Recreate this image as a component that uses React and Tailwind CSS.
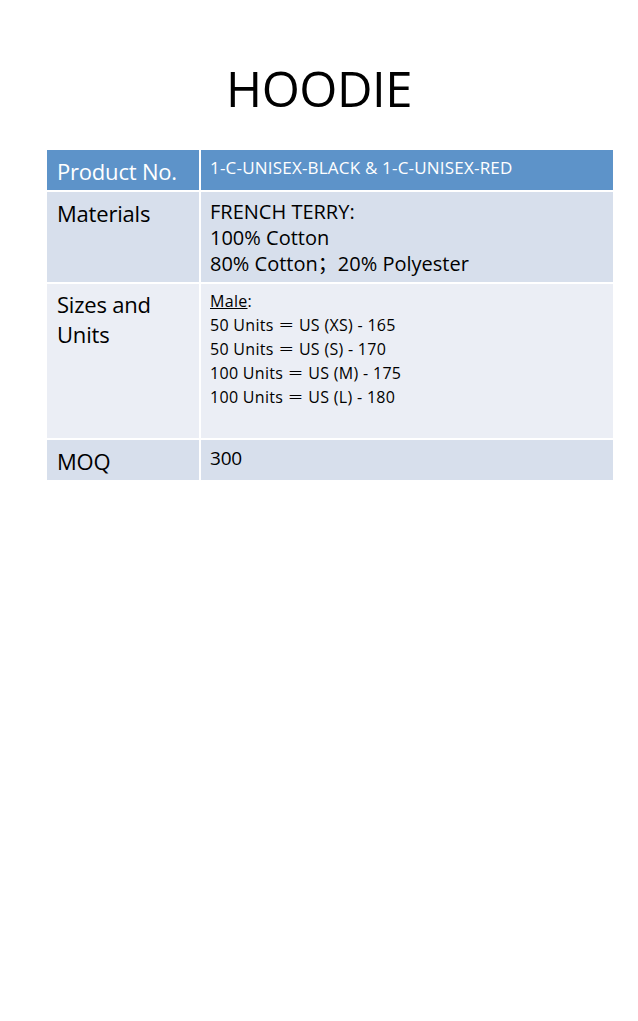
export default function App() {
  const font = { fontFamily: '"Open Sans", "Noto Sans CJK SC", sans-serif' };
  return (
    <div className="w-[638px] h-[1021px] bg-white text-black" style={font}>
      <h1 className="pt-[56px] text-center text-[49px] leading-[64px] tracking-[-0.5px]">HOODIE</h1>
      <div className="mt-[30px] mx-[47px] w-[566px] grid grid-cols-[152px_1fr] gap-x-[2px] gap-y-[2px]">
        <div className="h-[40px] bg-[#5d93c9] text-white text-[22px] leading-[40px] pl-[10px] pt-[1px] tracking-[-0.2px]">Product No.</div>
        <div className="h-[40px] bg-[#5d93c9] text-white text-[17px] leading-[36px] pl-[9px] tracking-[0.2px]">1-C-UNISEX-BLACK &amp; 1-C-UNISEX-RED</div>

        <div className="h-[90px] bg-[#d7dfec] text-[22px] leading-[30px] pl-[10px] pt-[6px] tracking-[-0.2px]">Materials</div>
        <div className="h-[90px] bg-[#d7dfec] text-[20px] leading-[26px] pl-[9px] pt-[7px] tracking-[0px]">
          <div>FRENCH TERRY:</div>
          <div>100% Cotton</div>
          <div>80% Cotton；20% Polyester</div>
        </div>

        <div className="h-[154px] bg-[#ebeef5] text-[22px] leading-[30px] pl-[10px] pt-[5px] tracking-[-0.2px]">
          Sizes and
          <br />
          Units
        </div>
        <div className="h-[154px] bg-[#ebeef5] text-[16px] leading-[24px] pl-[9px] pt-[5px] tracking-[0.3px]">
          <div><span className="underline">Male</span>:</div>
          <div>50 Units ＝ US (XS) - 165</div>
          <div>50 Units ＝ US (S) - 170</div>
          <div>100 Units ＝ US (M) - 175</div>
          <div>100 Units ＝ US (L) - 180</div>
        </div>

        <div className="h-[40px] bg-[#d7dfec] text-[22px] leading-[30px] pl-[10px] pt-[6px] tracking-[-0.2px]">MOQ</div>
        <div className="h-[40px] bg-[#d7dfec] text-[19px] leading-[26px] pl-[9px] pt-[5px] tracking-[-0.2px]">300</div>
      </div>
    </div>
  );
}
